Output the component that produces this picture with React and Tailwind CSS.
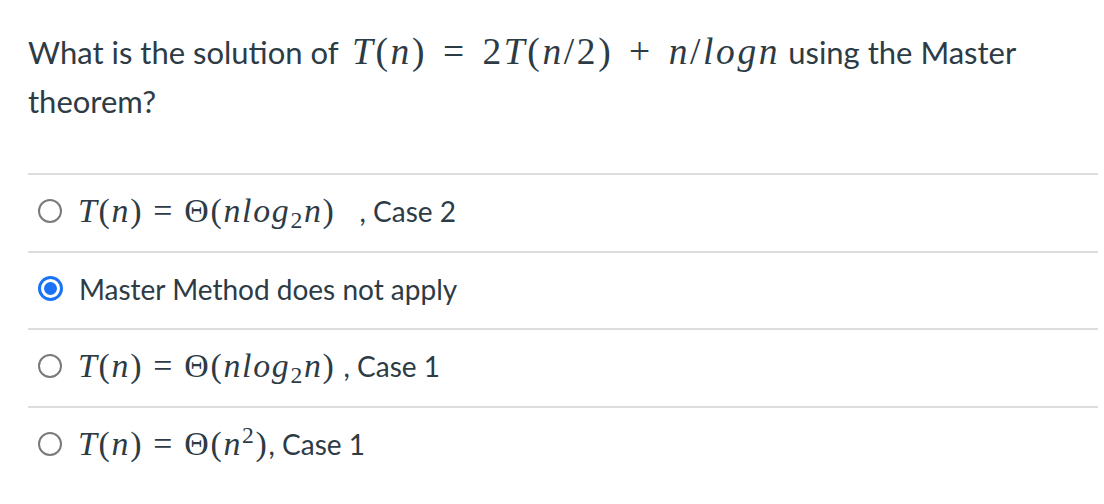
import React, { useState } from 'react';

const mathFont = { fontFamily: '"Liberation Serif", "DejaVu Serif", serif' };

function M({ children, wide }) {
  return (
    <span
      className={
        wide
          ? 'text-[1.21em] leading-none whitespace-nowrap tracking-[0.07em]'
          : 'text-[1.21em] leading-none whitespace-nowrap tracking-[0.05em]'
      }
      style={mathFont}
    >
      {children}
    </span>
  );
}

const I = ({ children }) => <i className="italic">{children}</i>;
const Op = ({ children }) => <span className="px-[0.3em] not-italic">{children}</span>;
const WideOp = ({ children }) => <span className="px-[0.42em] not-italic">{children}</span>;

function Radio({ checked }) {
  if (checked) {
    return (
      <span className="shrink-0 w-[25px] h-[25px] rounded-full border-[3px] border-[#1a73f5] bg-white flex items-center justify-center">
        <span className="w-[13px] h-[13px] rounded-full bg-[#1a73f5]" />
      </span>
    );
  }
  return <span className="shrink-0 w-[24px] h-[24px] rounded-full border-2 border-[#7a7a7a] bg-white" />;
}

function App() {
  const [selected, setSelected] = useState(1);

  const options = [
    {
      label: (
        <>
          <M>
            <I>T</I>(<I>n</I>)<Op>=</Op>Θ(<I>nlog</I>
            <sub className="text-[0.7em] not-italic">2</sub>
            <I>n</I>)
          </M>
          <span className="ml-[24px]">, Case 2</span>
        </>
      ),
    },
    { label: <span>Master Method does not apply</span> },
    {
      label: (
        <>
          <M>
            <I>T</I>(<I>n</I>)<Op>=</Op>Θ(<I>nlog</I>
            <sub className="text-[0.7em] not-italic">2</sub>
            <I>n</I>)
          </M>
          <span className="ml-[8px]">, Case 1</span>
        </>
      ),
    },
    {
      label: (
        <>
          <M>
            <I>T</I>(<I>n</I>)<Op>=</Op>Θ(<I>n</I>
            <sup className="text-[0.7em]">2</sup>)
          </M>
          <span>, Case 1</span>
        </>
      ),
    },
  ];

  return (
    <div
      className="min-h-screen bg-white text-[#2d3b45] pl-[28px] pr-[6px] pt-[28px]"
      style={{ fontFamily: 'Lato, "Open Sans", sans-serif' }}
    >
      <p className="text-[31px] leading-[49px] pr-[50px]">
        What is the solution of{' '}
        <span className="ml-[6px]" />
        <M wide>
          <I>T</I>(<I>n</I>)<WideOp>=</WideOp>2<I>T</I>(<I>n</I>/2)<WideOp>+</WideOp>
          <I>n</I>/<I>logn</I>
        </M>{' '}
        using the Master theorem?
      </p>

      <ul className="mt-[47px]">
        {options.map((opt, i) => (
          <li
            key={i}
            onClick={() => setSelected(i)}
            className="border-t-2 border-[#dddddd] h-[77.6px] flex items-center pl-[10px] pb-[3px] gap-[16px] text-[28px] cursor-pointer"
          >
            <Radio checked={selected === i} />
            <span className="flex items-baseline">{opt.label}</span>
          </li>
        ))}
      </ul>
    </div>
  );
}

export default App;
